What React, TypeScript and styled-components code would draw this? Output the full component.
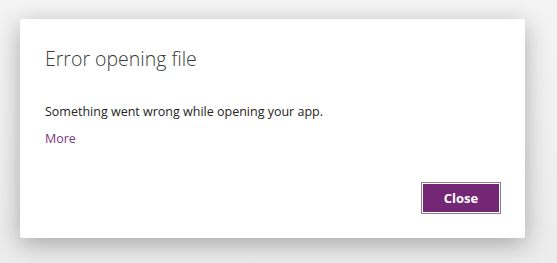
import React from "react";
import styled, { createGlobalStyle } from "styled-components";

const Global = createGlobalStyle`
  html, body { margin: 0; padding: 0; background: #f2f2f2; }
  body { font-family: "Open Sans", "Noto Sans", sans-serif; }
`;

const Page = styled.div`
  width: 557px;
  height: 263px;
  box-sizing: border-box;
  padding: 19px 0 0 20px;
  background: linear-gradient(#f4f4f4, #ececec);
  overflow: hidden;
`;

const Dialog = styled.div`
  width: 505px;
  height: 219px;
  box-sizing: border-box;
  background: #fff;
  border-radius: 2px;
  box-shadow: 0 6px 24px rgba(0, 0, 0, 0.3);
  padding: 26px 24px 24px 24px;
  display: flex;
  flex-direction: column;
`;

const Title = styled.h1`
  margin: 0;
  font-family: "Open Sans", sans-serif;
  font-weight: 300;
  font-size: 19.5px;
  line-height: 28px;
  color: #3a3a3a;
  padding-left: 1px;
`;

const Message = styled.p`
  margin: 30px 0 0 0;
  font-size: 12.5px;
  line-height: 18px;
  color: #252525;
  padding-left: 1px;
`;

const MoreLink = styled.a`
  margin-top: 9px;
  font-size: 12.5px;
  line-height: 18px;
  color: #7a3a80;
  text-decoration: none;
  align-self: flex-start;
  padding-left: 1px;
`;

const Footer = styled.div`
  margin-top: auto;
  display: flex;
  justify-content: flex-end;
`;

const CloseButton = styled.button`
  width: 80px;
  height: 32px;
  box-sizing: border-box;
  border: 1px solid #8d7d8d;
  box-shadow: inset 0 0 0 1px #fff;
  background: #742774;
  color: #fff;
  font-family: "Open Sans", sans-serif;
  font-weight: 700;
  font-size: 13px;
  padding: 0;
  cursor: pointer;
`;

export default function App() {
  return (
    <>
      <Global />
      <Page>
        <Dialog>
          <Title>Error opening file</Title>
          <Message>Something went wrong while opening your app.</Message>
          <MoreLink href="#">More</MoreLink>
          <Footer>
            <CloseButton>Close</CloseButton>
          </Footer>
        </Dialog>
      </Page>
    </>
  );
}
